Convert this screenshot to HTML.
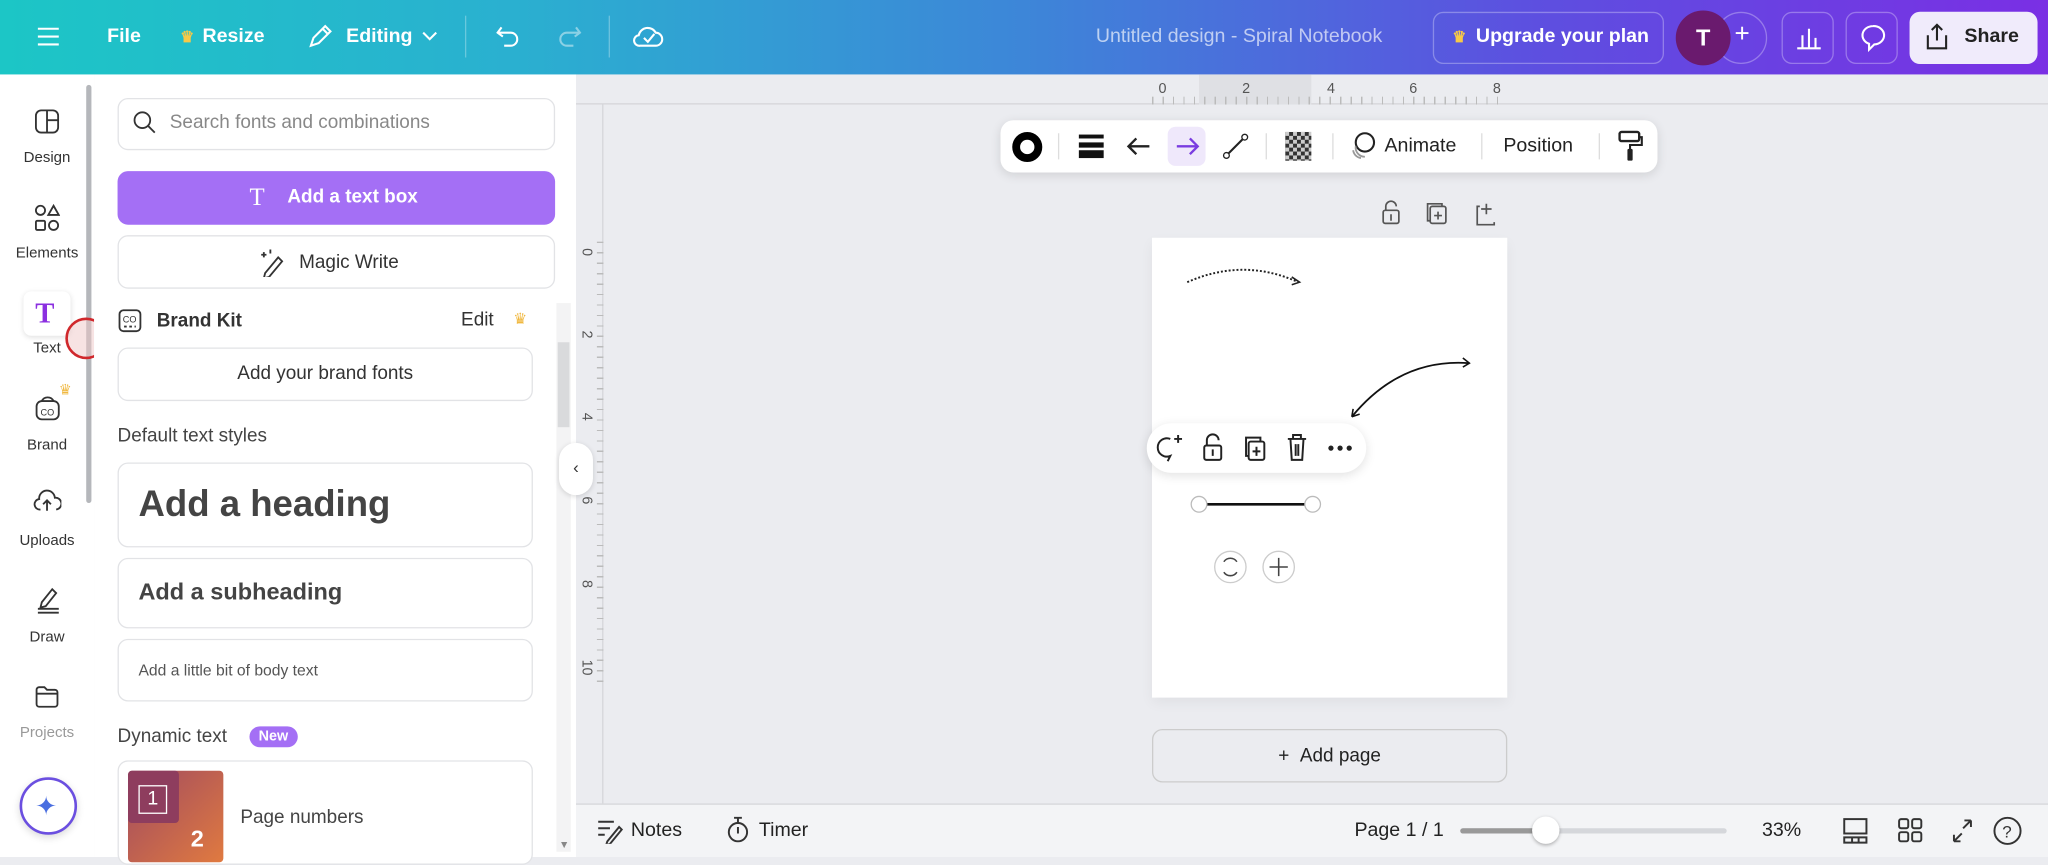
<!DOCTYPE html>
<html><head><meta charset="utf-8"><style>
*{box-sizing:border-box;margin:0;padding:0}
html,body{width:2048px;height:857px;overflow:hidden;background:#ebecf0}
#w{position:absolute;left:0;top:0;width:1568px;height:656px;transform:scale(1.30612,1.3064);transform-origin:0 0;font-family:"Liberation Sans",sans-serif;background:#ebecf0}
.a{position:absolute}
.top{left:0;top:0;width:1568px;height:57px;background:linear-gradient(90deg,#1cc6c6 0%,#2ab0d0 25%,#3d86d8 50%,#5d4fe0 75%,#7a2fe4 100%);color:#fff;font-weight:bold;font-size:15px}
.top span{position:absolute;top:19px}
.ico{stroke:#fff;fill:none;stroke-width:1.6}
.rail{left:0;top:57px;width:72px;height:599px;background:#fff}
.rl{position:absolute;width:72px;text-align:center;font-size:11.5px;color:#333}
.panel{left:72px;top:57px;width:369px;height:599px;background:#fff}
.box{position:absolute;border:1px solid #e2e3e6;border-radius:8px;background:#fff}
.g{stroke:#333;fill:none;stroke-width:1.4}
</style></head><body><div id="w">

<div class="a top">
 <svg class="a" style="left:27px;top:19px" width="20" height="18"><path class="ico" d="M2 3h16M2 9h16M2 15h16"/></svg>
 <span style="left:82px">File</span>
 <span style="left:138px;color:#f7c948;font-size:12px;top:21px">♛</span><span style="left:155px">Resize</span>
 <svg class="a" style="left:234px;top:17px" width="22" height="22"><path class="ico" d="M4 18l2-6 9-9 4 4-9 9zM13 5l4 4"/></svg>
 <span style="left:265px">Editing</span>
 <svg class="a" style="left:322px;top:23px" width="14" height="10"><path class="ico" d="M2 2l5 5 5-5"/></svg>
 <div class="a" style="left:356px;top:12px;width:1px;height:32px;background:rgba(255,255,255,.3)"></div>
 <svg class="a" style="left:378px;top:17px" width="22" height="22"><path class="ico" d="M6 4L3 8l4 3M3 8h10a5 5 0 010 10H8"/></svg>
 <svg class="a" style="left:425px;top:17px" width="22" height="22" opacity=".45"><path class="ico" d="M16 4l3 4-4 3M19 8H9a5 5 0 000 10h5"/></svg>
 <div class="a" style="left:466px;top:12px;width:1px;height:32px;background:rgba(255,255,255,.3)"></div>
 <svg class="a" style="left:483px;top:16px" width="26" height="24"><path class="ico" d="M7 19h12a5 5 0 000-10 7 7 0 00-13 2 4 4 0 001 8zM10 13l3 3 5-6"/></svg>
 <span style="left:839px;font-weight:normal;color:rgba(255,255,255,.65)">Untitled design - Spiral Notebook</span>
 <div class="a" style="left:1097px;top:9px;width:177px;height:40px;border:1px solid rgba(255,255,255,.3);border-radius:8px"></div>
 <span style="left:1112px;color:#f7c948;font-size:12px;top:21px">♛</span><span style="left:1130px">Upgrade your plan</span>
 <div class="a" style="left:1313px;top:9px;width:40px;height:40px;border:1px solid rgba(255,255,255,.3);border-radius:20px"></div>
 <div class="a" style="left:1283px;top:8px;width:42px;height:42px;border-radius:21px;background:#6a1a6e;text-align:center;line-height:42px;font-size:18px">T</div>
 <span style="left:1328px;font-size:20px;top:15px;font-weight:normal">+</span>
 <div class="a" style="left:1364px;top:9px;width:40px;height:40px;border:1px solid rgba(255,255,255,.3);border-radius:8px"></div>
 <svg class="a" style="left:1374px;top:18px" width="22" height="22"><path class="ico" d="M2 19h18M6 19V9M11 19V4M16 19V11"/></svg>
 <div class="a" style="left:1413px;top:9px;width:40px;height:40px;border:1px solid rgba(255,255,255,.3);border-radius:8px"></div>
 <svg class="a" style="left:1422px;top:17px" width="24" height="24"><path class="ico" d="M12 3a8 7 0 00-3 13.5L9 21l4-4a8 7 0 00-1-14z"/></svg>
 <div class="a" style="left:1462px;top:9px;width:98px;height:40px;background:#f0ebfb;border-radius:8px"></div>
 <svg class="a" style="left:1472px;top:16px" width="22" height="24"><path d="M11 15V3M7 7l4-4 4 4M4 11v10h14V11" stroke="#222" fill="none" stroke-width="1.6"/></svg>
 <span style="left:1504px;color:#222">Share</span>
</div>

<div class="a rail">
 <div class="a" style="left:66px;top:8px;width:4px;height:320px;background:#b5b7bb;border-radius:2px"></div>
 <svg class="a" style="left:26px;top:26px" width="20" height="20"><rect class="g" x="1.5" y="1.5" width="17" height="17" rx="4"/><path class="g" d="M10 1.5v17M10 9h8.5"/></svg>
 <div class="rl" style="top:58px">Design</div>
 <svg class="a" style="left:26px;top:99px" width="20" height="22"><circle class="g" cx="5" cy="5" r="3.5"/><path class="g" d="M15 1.5l4 7h-8z"/><rect class="g" x="1.5" y="13" width="7" height="7" rx="1"/><circle class="g" cx="15" cy="16.5" r="3.5"/></svg>
 <div class="rl" style="top:131px">Elements</div>
 <div class="a" style="left:18px;top:166px;width:36px;height:34px;background:#fff;border-radius:6px;box-shadow:0 1px 4px rgba(0,0,0,.12)"></div>
 <div class="a" style="left:27px;top:170px;color:#8b2fe0;font-size:22px;font-weight:bold;font-family:'Liberation Serif',serif">T</div>
 <div class="rl" style="top:204px">Text</div>
 <div class="a" style="left:50px;top:186px;width:32px;height:32px;border:2px solid #d0282c;border-radius:16px;background:rgba(240,200,200,.5)"></div>
 <div class="a" style="left:45px;top:235px;color:#f0b840;font-size:11px">♛</div>
 <svg class="a" style="left:26px;top:243px" width="22" height="24"><rect class="g" x="2" y="7" width="17" height="14" rx="4"/><path class="g" d="M6 7a5 5 0 019 0"/><text x="5" y="18" font-size="7" font-family="Liberation Sans" fill="#333">CO</text></svg>
 <div class="rl" style="top:278px">Brand</div>
 <svg class="a" style="left:25px;top:316px" width="22" height="20"><path class="g" d="M6 17a4 4 0 01-1-8 6 6 0 0112-1 4 4 0 011 9M11 18v-7M8 13l3-3 3 3"/></svg>
 <div class="rl" style="top:351px">Uploads</div>
 <svg class="a" style="left:26px;top:390px" width="22" height="24"><path class="g" d="M6 14l8-10 3 3-8 10-4 1zM3 19h16M3 22h16"/></svg>
 <div class="rl" style="top:425px">Draw</div>
 <svg class="a" style="left:26px;top:466px" width="20" height="20"><path class="g" d="M2 5a2 2 0 012-2h4l2 2h6a2 2 0 012 2v9a2 2 0 01-2 2H4a2 2 0 01-2-2zM2 8h16"/></svg>
 <div class="rl" style="top:498px;color:#999">Projects</div>
 <div class="a" style="left:15px;top:538px;width:44px;height:44px;border-radius:22px;border:2px solid #6b4fe0;background:#fff;box-shadow:0 2px 6px rgba(0,0,0,.15)"></div>
 <div class="a" style="left:27px;top:548px;color:#4a6ee0;font-size:20px">✦</div>
</div>

<div class="a panel">
 <div class="box" style="left:18px;top:18px;width:335px;height:40px"></div>
 <svg class="a" style="left:29px;top:27px" width="20" height="20"><circle class="g" cx="8" cy="8" r="6" stroke="#555"/><path class="g" d="M12.5 12.5l5 5" stroke="#555"/></svg>
 <div class="a" style="left:58px;top:29px;font-size:14.5px;color:#888">Search fonts and combinations</div>
 <div class="a" style="left:18px;top:74px;width:335px;height:41px;background:#a46ff5;border-radius:8px"></div>
 <div class="a" style="left:119px;top:84px;font-size:19px;color:#fff;font-family:'Liberation Serif',serif">T</div>
 <div class="a" style="left:148px;top:86px;font-size:14.5px;color:#fff;font-weight:bold">Add a text box</div>
 <div class="box" style="left:18px;top:123px;width:335px;height:41px"></div>
 <svg class="a" style="left:126px;top:133px" width="22" height="22"><path class="g" d="M5 19l10-12 3 3-10 12-4 1zM4 3v4M2 5h4M9 1v3"/></svg>
 <div class="a" style="left:157px;top:136px;font-size:14.5px;color:#333">Magic Write</div>
 <div class="a" style="left:354px;top:175px;width:11px;height:420px;background:#f3f3f4"></div>
 <div class="a" style="left:355px;top:205px;width:9px;height:65px;background:#d9dadc"></div>
 <svg class="a" style="left:18px;top:179px" width="20" height="20"><rect class="g" x="1.5" y="1.5" width="16" height="16" rx="3"/><text x="4" y="11" font-size="7" font-family="Liberation Sans" fill="#333">CO</text><path class="g" d="M5 14h9" stroke-dasharray="2 2"/></svg>
 <div class="a" style="left:48px;top:181px;font-size:14.5px;color:#333;font-weight:bold">Brand Kit</div>
 <div class="a" style="left:281px;top:180px;font-size:14.5px;color:#333">Edit</div>
 <div class="a" style="left:321px;top:180px;font-size:12px;color:#f0b840">♛</div>
 <div class="box" style="left:18px;top:209px;width:318px;height:41px"></div>
 <div class="a" style="left:18px;top:221px;width:318px;text-align:center;font-size:14.5px;color:#333">Add your brand fonts</div>
 <div class="a" style="left:18px;top:269px;font-size:14.5px;color:#444">Default text styles</div>
 <div class="box" style="left:18px;top:297px;width:318px;height:65px"></div>
 <div class="a" style="left:34px;top:313px;font-size:28px;color:#444;font-weight:bold">Add a heading</div>
 <div class="box" style="left:18px;top:370px;width:318px;height:54px"></div>
 <div class="a" style="left:34px;top:386px;font-size:18px;color:#444;font-weight:bold">Add a subheading</div>
 <div class="box" style="left:18px;top:432px;width:318px;height:48px"></div>
 <div class="a" style="left:34px;top:449px;font-size:12px;color:#555">Add a little bit of body text</div>
 <div class="a" style="left:18px;top:499px;font-size:14.5px;color:#444">Dynamic text</div>
 <div class="a" style="left:119px;top:499px;height:16px;padding:0 7px;background:#a46ff5;border-radius:8px;color:#fff;font-size:11px;font-weight:bold;line-height:16px">New</div>
 <div class="box" style="left:18px;top:525px;width:318px;height:80px"></div>
 <div class="a" style="left:26px;top:533px;width:73px;height:70px;background:linear-gradient(135deg,#a04a60,#e07a40);border-radius:3px"></div>
 <div class="a" style="left:26px;top:533px;width:39px;height:40px;background:#8e3d5e;border-radius:3px"></div>
 <div class="a" style="left:34px;top:544px;width:22px;height:22px;border:1.5px solid #fff;color:#fff;font-size:15px;text-align:center;line-height:20px">1</div>
 <div class="a" style="left:74px;top:575px;color:#fff;font-size:18px;font-weight:bold">2</div>
 <div class="a" style="left:112px;top:561px;font-size:14.5px;color:#444">Page numbers</div>
 <div class="a" style="left:356px;top:585px;font-size:8px;color:#888">▼</div>
</div>

<!-- rulers -->
<div class="a" style="left:441px;top:57px;width:1127px;height:23px;background:#ebecf0;border-bottom:1px solid #d5d6da"></div>
<div class="a" style="left:918px;top:57px;width:86px;height:23px;background:#dfe0e4"></div>
<div class="a" style="left:882px;top:60px;width:270px;height:20px;font-size:11px;color:#555">
 <span class="a" style="left:5px;top:2px">0</span><span class="a" style="left:69px;top:2px">2</span><span class="a" style="left:134px;top:2px">4</span><span class="a" style="left:197px;top:2px">6</span><span class="a" style="left:261px;top:2px">8</span>
 <div class="a" style="left:0;top:14px;width:266px;height:6px;background:repeating-linear-gradient(90deg,#bbb 0 1px,transparent 1px 8px)"></div>
</div>
<div class="a" style="left:441px;top:80px;width:21px;height:535px;border-right:1px solid #d5d6da"></div>
<div class="a" style="left:442px;top:185px;width:20px;height:340px;font-size:11px;color:#555">
 <div class="a" style="left:15px;top:0;width:5px;height:340px;background:repeating-linear-gradient(180deg,#bbb 0 1px,transparent 1px 8px)"></div>
 <span class="a" style="left:4px;top:2px;transform:rotate(90deg)">0</span><span class="a" style="left:4px;top:65px;transform:rotate(90deg)">2</span><span class="a" style="left:4px;top:128px;transform:rotate(90deg)">4</span><span class="a" style="left:4px;top:192px;transform:rotate(90deg)">6</span><span class="a" style="left:4px;top:256px;transform:rotate(90deg)">8</span><span class="a" style="left:1px;top:320px;transform:rotate(90deg)">10</span>
</div>
<div class="a" style="left:428px;top:339px;width:26px;height:40px;background:#fff;border-radius:13px;box-shadow:0 1px 4px rgba(0,0,0,.15);text-align:center;line-height:38px;font-size:13px;color:#333">‹</div>

<!-- toolbar -->
<div class="a" style="left:766px;top:92px;width:503px;height:40px;background:#fff;border-radius:10px;box-shadow:0 2px 8px rgba(0,0,0,.12)"></div>
<div class="a" style="left:775px;top:101px;width:23px;height:23px;border-radius:12px;border:6px solid #000"></div>
<div class="a" style="left:810px;top:102px;width:1px;height:20px;background:#ddd"></div>
<div class="a" style="left:826px;top:103px;width:19px;height:3px;background:#111"></div><div class="a" style="left:826px;top:109px;width:19px;height:4px;background:#111"></div><div class="a" style="left:826px;top:115px;width:19px;height:6px;background:#111"></div>
<svg class="a" style="left:861px;top:102px" width="22" height="20"><path d="M19 10H3M9 4l-6 6 6 6" stroke="#222" fill="none" stroke-width="1.8"/></svg>
<div class="a" style="left:894px;top:97px;width:29px;height:30px;background:#efe8fb;border-radius:6px"></div>
<svg class="a" style="left:898px;top:102px" width="22" height="20"><path d="M3 10h16M13 4l6 6-6 6" stroke="#7a3ce0" fill="none" stroke-width="1.8"/></svg>
<svg class="a" style="left:934px;top:100px" width="24" height="24"><path d="M5 19L19 5" stroke="#222" stroke-width="1.6"/><circle cx="5" cy="19" r="2.2" fill="#fff" stroke="#222"/><circle cx="19" cy="5" r="2.2" fill="#fff" stroke="#222"/></svg>
<div class="a" style="left:969px;top:102px;width:1px;height:20px;background:#ddd"></div>
<div class="a" style="left:984px;top:101px;width:20px;height:22px;background:repeating-conic-gradient(#333 0 25%,#ccc 0 50%) 0 0/6px 6px"></div>
<div class="a" style="left:1020px;top:102px;width:1px;height:20px;background:#ddd"></div>
<svg class="a" style="left:1032px;top:99px" width="24" height="26"><circle cx="13" cy="10" r="7" fill="none" stroke="#222" stroke-width="1.6"/><path d="M6 13a7 7 0 007 8M4 16a7 7 0 006 6" stroke="#999" fill="none" stroke-width="1.4"/></svg>
<div class="a" style="left:1060px;top:103px;font-size:15px;color:#222">Animate</div>
<div class="a" style="left:1134px;top:102px;width:1px;height:20px;background:#ddd"></div>
<div class="a" style="left:1151px;top:103px;font-size:15px;color:#222">Position</div>
<div class="a" style="left:1224px;top:102px;width:1px;height:20px;background:#ddd"></div>
<svg class="a" style="left:1237px;top:99px" width="22" height="26"><rect x="3" y="2" width="15" height="7" rx="1.5" fill="none" stroke="#222" stroke-width="1.8"/><path d="M18 6h2v6h-9v4" fill="none" stroke="#222" stroke-width="1.6"/><rect x="9" y="15" width="4" height="9" rx="1" fill="#222"/></svg>

<!-- page -->
<svg class="a" style="left:1056px;top:152px" width="100" height="22"><g fill="none" stroke="#555" stroke-width="1.3"><rect x="3" y="9" width="12" height="10" rx="1.5"/><path d="M5 9V6a4 4 0 018 0"/><path d="M9 12v5"/><rect x="39" y="6" width="12" height="13" rx="1.5"/><path d="M39 17h-2V4h11v2M45 10v6M42 13h6"/><path d="M77 6h-2v14h13v-2M82 4v8M78 8h8"/></g></svg>
<div class="a" style="left:882px;top:182px;width:272px;height:352px;background:#fff;box-shadow:0 4px 10px rgba(0,0,0,.05)"></div>
<svg class="a" style="left:882px;top:182px" width="272" height="280">
 <path d="M27 34Q70 15 112 34" stroke="#222" fill="none" stroke-width="1.5" stroke-dasharray="1.5 1.5"/><path d="M107 30l6 4-6 2" stroke="#222" fill="none" stroke-width="1.2"/>
 <path d="M153 137Q190 92 243 96" stroke="#111" fill="none" stroke-width="1.4"/><path d="M238 92l5 4-5 3M153 137l1-6M153 137l6-2" stroke="#111" fill="none" stroke-width="1.2"/>
 <path d="M36 204H122" stroke="#111" stroke-width="2"/>
 <circle cx="36" cy="204" r="6" fill="#fff" stroke="#bbb"/><circle cx="123" cy="204" r="6" fill="#fff" stroke="#bbb"/>
 <circle cx="60" cy="252" r="12" fill="#fff" stroke="#ccc"/><circle cx="97" cy="252" r="12" fill="#fff" stroke="#ccc"/>
 <path d="M55 248a6 6 0 0110 0M65 256a6 6 0 01-10 0" stroke="#444" fill="none" stroke-width="1.2"/>
 <path d="M97 245v14M90 252h14" stroke="#444" stroke-width="1.2"/>
</svg>
<div class="a" style="left:878px;top:324px;width:168px;height:38px;background:#fff;border-radius:19px;box-shadow:0 2px 8px rgba(0,0,0,.12)"></div>
<svg class="a" style="left:884px;top:330px" width="156" height="26"><g fill="none" stroke="#222" stroke-width="1.5"><path d="M12 6a7 7 0 100 13l-2 4M18 3v6M15 6h6"/><rect x="38" y="11" width="13" height="11" rx="1.5"/><path d="M40 11V7a4.5 4.5 0 019 0M44.5 14v5"/><rect x="72" y="8" width="12" height="14" rx="1.5"/><path d="M72 19h-2V5h11v3M78 12v7M75 15.5h6"/><path d="M102 6h14M106 6V3h6v3M104 6l1 16h8l1-16M108 10v9M110 10v9"/></g><circle cx="135" cy="13" r="2" fill="#222"/><circle cx="142" cy="13" r="2" fill="#222"/><circle cx="149" cy="13" r="2" fill="#222"/></svg>

<div class="a" style="left:882px;top:558px;width:272px;height:41px;border:1px solid #ccc;border-radius:8px;text-align:center;line-height:40px;font-size:14.5px;color:#222">+&nbsp;&nbsp;Add page</div>

<!-- bottom bar -->
<div class="a" style="left:441px;top:615px;width:1127px;height:41px;background:#f3f4f6;border-top:1px solid #d5d6da"></div>
<svg class="a" style="left:457px;top:626px" width="20" height="20"><path d="M1 3h12M1 8h9M1 13h5M8 18l9-11 2 2-9 11-3 1z" stroke="#333" fill="none" stroke-width="1.5"/></svg>
<div class="a" style="left:483px;top:627px;font-size:15px;color:#222">Notes</div>
<svg class="a" style="left:555px;top:624px" width="20" height="22"><circle cx="10" cy="13" r="7" stroke="#333" fill="none" stroke-width="1.5"/><path d="M7 2h6M10 2v4M10 9v5" stroke="#333" fill="none" stroke-width="1.5"/></svg>
<div class="a" style="left:581px;top:627px;font-size:15px;color:#222">Timer</div>
<div class="a" style="left:1037px;top:627px;font-size:15px;color:#222">Page 1 / 1</div>
<div class="a" style="left:1118px;top:634px;width:204px;height:4px;background:#d5d7db;border-radius:2px"></div>
<div class="a" style="left:1118px;top:634px;width:66px;height:4px;background:#999;border-radius:2px"></div>
<div class="a" style="left:1173px;top:625px;width:21px;height:21px;background:#fff;border-radius:11px;box-shadow:0 1px 3px rgba(0,0,0,.3)"></div>
<div class="a" style="left:1349px;top:627px;font-size:15px;color:#222">33%</div>
<svg class="a" style="left:1410px;top:624px" width="140" height="24"><g fill="none" stroke="#333" stroke-width="1.5"><rect x="2" y="3" width="17" height="11"/><path d="M2 17h17v4H2zM8 17v4M13 17v4"/><rect x="44" y="3" width="7" height="7" rx="1.5"/><rect x="54" y="3" width="7" height="7" rx="1.5"/><rect x="44" y="13" width="7" height="7" rx="1.5"/><rect x="54" y="13" width="7" height="7" rx="1.5"/><path d="M86 20l6-6M86 20v-5M86 20h5M99 4l-6 6M99 4v5M99 4h-5"/><circle cx="127" cy="12" r="10"/></g><text x="123" y="17" font-size="13" font-family="Liberation Sans" fill="#333">?</text></svg>

</div></body></html>
